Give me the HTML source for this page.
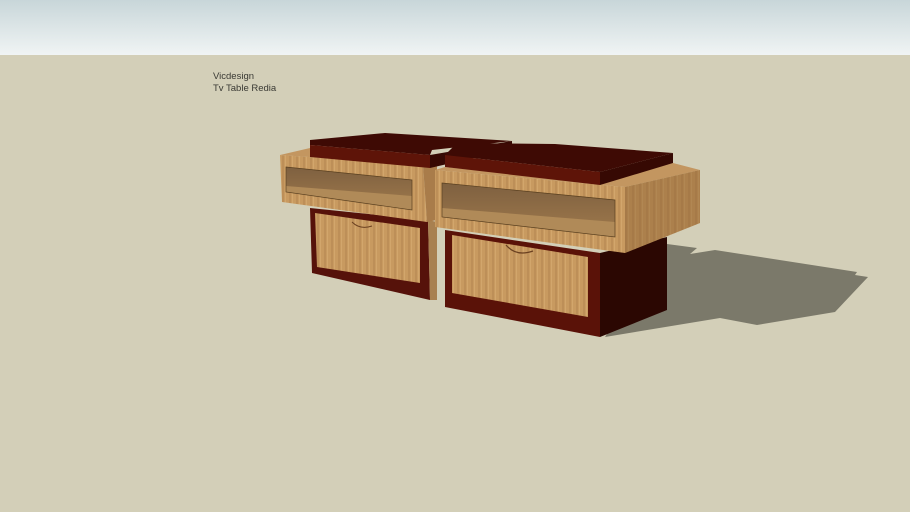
<!DOCTYPE html>
<html><head><meta charset="utf-8"><style>
html,body{margin:0;padding:0;width:910px;height:512px;overflow:hidden;background:#d3cfb8}
.t{position:absolute;left:213px;font:9.5px "Liberation Sans",sans-serif;color:#3a3a34}
</style></head><body>
<svg width="910" height="512" style="position:absolute;left:0;top:0">
<defs>
<linearGradient id="sky" x1="0" y1="0" x2="0" y2="1"><stop offset="0" stop-color="#c8d6d9"/><stop offset="1" stop-color="#f0f4f4"/></linearGradient>
<linearGradient id="woodin" x1="0" y1="0" x2="0" y2="1"><stop offset="0" stop-color="#7e6040"/><stop offset="1" stop-color="#a07a4c"/></linearGradient>
<pattern id="grain" width="7" height="10" patternUnits="userSpaceOnUse"><rect width="7" height="10" fill="#c89a60"/><rect x="2" width="2" height="10" fill="#bd8f58"/><rect x="5" width="1" height="10" fill="#d2a66c"/></pattern>
</defs>
<rect width="910" height="55" fill="url(#sky)"/>
<rect y="55" width="910" height="457" fill="#d3cfb8"/>
<polygon points="667,244 697,248 690,254 715,250 857,272 855,275 868,277 835,312 757,325 720,318 605,337" fill="#7b796a"/>
<!-- LEFT UNIT -->
<polygon points="310,208 428,220 430,300 312,273" fill="#56120a"/>
<polygon points="315,213 420,228 420,283 317,267" fill="url(#grain)"/>
<path d="M352,222 q8,8 20,4" stroke="#6a4020" fill="none" stroke-width="1"/>
<polygon points="428,220 437,222 437,300 430,300" fill="#a88050"/>
<polygon points="280,155 310,148 437,160 437,172 423,165" fill="#c39660"/>
<polygon points="280,155 423,165 427,222 282,202" fill="url(#grain)"/>
<polygon points="423,165 437,166 437,220 427,222" fill="#a97c4a"/>
<polygon points="286,167 412,180 412,210 286,192" fill="url(#woodin)"/>
<polygon points="286,186 412,196 412,210 286,192" fill="#b08a58"/>
<polygon points="286,167 412,180 412,210 286,192" fill="none" stroke="#5a4020" stroke-width="0.7"/>
<polygon points="310,140 385,133 512,141 432,150 430,155 310,145" fill="#3e0a04"/>
<polygon points="310,145 430,155 430,168 310,157" fill="#5e1408"/>
<polygon points="430,155 512,141 512,149 430,168" fill="#360903"/>
<!-- RIGHT UNIT -->
<polygon points="445,230 600,253 600,337 445,307" fill="#5a1208"/>
<polygon points="600,253 667,237 667,310 600,337" fill="#2b0702"/>
<polygon points="452,235 588,257 588,317 452,293" fill="url(#grain)"/>
<path d="M506,245 q10,12 27,6" stroke="#6a4020" fill="none" stroke-width="1.2"/>
<polygon points="435,170 445,167 600,183 673,163 700,170 625,187" fill="#c39660"/>
<polygon points="435,170 625,187 625,253 435,227" fill="url(#grain)"/>
<polygon points="625,187 700,170 700,223 625,253" fill="url(#grain)"/>
<polygon points="625,187 700,170 700,223 625,253" fill="#8a6236" opacity="0.45"/>
<polygon points="442,183 615,200 615,237 442,217" fill="url(#woodin)"/>
<polygon points="442,208 615,222 615,237 442,217" fill="#b08a58"/>
<polygon points="442,183 615,200 615,237 442,217" fill="none" stroke="#5a4020" stroke-width="0.7"/>
<polygon points="445,155 457,143 555,144 673,153 600,172" fill="#3e0a04"/>
<polygon points="445,155 600,172 600,185 445,167" fill="#5e1408"/>
<polygon points="600,172 673,153 673,163 600,185" fill="#360903"/>
</svg>
<div class="t" style="top:71px">Vicdesign</div>
<div class="t" style="top:83px">Tv Table Redia</div>
</body></html>
